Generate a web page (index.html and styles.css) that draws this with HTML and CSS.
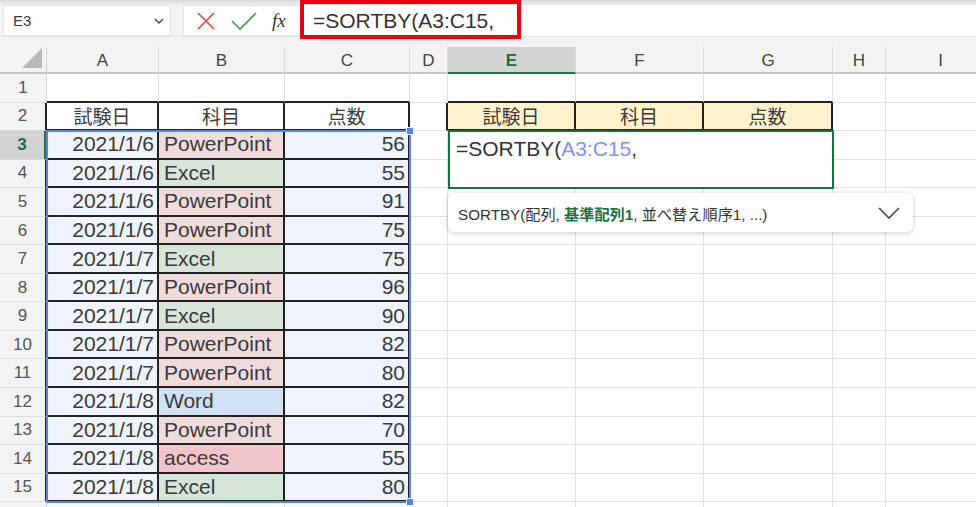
FILE: index.html
```html
<!DOCTYPE html>
<html lang="ja">
<head>
    <meta charset="UTF-8">
    <title>SORTBY</title>
    <link rel="stylesheet" href="styles.css">
</head>
<body>
    <div class="top">
        <div class="formula-bar">
            <div class="name-box">
                <span>E3</span>
                <svg class="caret" width="10" height="6" viewBox="0 0 10 6"><path d="M1 1 L5 5 L9 1" fill="none" stroke="#444" stroke-width="1.4"/></svg>
            </div>
            <div class="fx-box">
                <svg width="20" height="20" viewBox="0 0 20 20"><path d="M2 2 L18 18 M18 2 L2 18" stroke="#e2453c" stroke-width="1.6"/></svg>
                <svg width="26" height="20" viewBox="0 0 26 20"><path d="M1 10 L9 18 L25 2" fill="none" stroke="#3f9c4f" stroke-width="1.6"/></svg>
                <span class="fx">fx</span>
            </div>
            <div class="formula-input">=SORTBY(A3:C15,</div>
        </div>
        <div class="mark"></div>
    </div>

    <div class="sheet" id="sheet"></div>

    <script>
        const sheet = document.getElementById('sheet');
        const cols = ['', 'A', 'B', 'C', 'D', 'E', 'F', 'G', 'H', 'I'];
        const data = [
            ['2021/1/6', 'PowerPoint', 56],
            ['2021/1/6', 'Excel', 55],
            ['2021/1/6', 'PowerPoint', 91],
            ['2021/1/6', 'PowerPoint', 75],
            ['2021/1/7', 'Excel', 75],
            ['2021/1/7', 'PowerPoint', 96],
            ['2021/1/7', 'Excel', 90],
            ['2021/1/7', 'PowerPoint', 82],
            ['2021/1/7', 'PowerPoint', 80],
            ['2021/1/8', 'Word', 82],
            ['2021/1/8', 'PowerPoint', 70],
            ['2021/1/8', 'access', 55],
            ['2021/1/8', 'Excel', 80]
        ];
        const subjectClass = { PowerPoint: 'pp', Excel: 'xl', Word: 'wd', access: 'ac' };

        function cell(cls, text) {
            const el = document.createElement('div');
            el.className = 'cell ' + cls;
            if (text !== undefined) el.textContent = text;
            sheet.appendChild(el);
            return el;
        }

        // 列見出し
        cols.forEach((c, i) => {
            if (i === 0) {
                cell('corner').innerHTML = '<span class="tri"></span>';
            } else {
                cell('col-head' + (c === 'E' ? ' active' : ''), c);
            }
        });

        // 行 (16行目は下端で切れるので番号なし)
        for (let r = 1; r <= 16; r++) {
            let head = 'row-head';
            if (r >= 2 && r <= 15) head += ' edge';
            if (r === 3) head += ' active';
            cell(head, r < 16 ? r : '');

            for (let c = 1; c < cols.length; c++) {
                let cls = '';
                let text;
                const col = cols[c];

                if (r === 1 && (col <= 'C' || (col >= 'E' && col <= 'G'))) cls += ' top-edge';
                if (r === 2 && col === 'D') cls += ' right-edge';

                if (r === 2 && col <= 'C') {
                    cls += ' tb head';
                    text = ['試験日', '科目', '点数'][c - 1];
                }
                if (r === 2 && col >= 'E' && col <= 'G') {
                    cls += ' tb head yellow';
                    text = ['試験日', '科目', '点数'][c - 5];
                }
                if (r >= 3 && r <= 15 && col <= 'C') {
                    const row = data[r - 3];
                    cls += ' tb';
                    if (col === 'A') { cls += ' num sel'; text = row[0]; }
                    if (col === 'B') { cls += ' ' + subjectClass[row[1]]; text = row[1]; }
                    if (col === 'C') { cls += ' num sel'; text = row[2]; }
                }
                cell(cls.trim(), text);
            }
        }

        // 参照範囲・編集中セル・ヒント
        const range = document.createElement('div');
        range.className = 'range';
        range.innerHTML = '<span class="handle tr"></span><span class="handle br"></span>';
        sheet.appendChild(range);

        const edit = document.createElement('div');
        edit.className = 'editing';
        edit.innerHTML = '=SORTBY(<span class="ref">A3:C15</span>,';
        sheet.appendChild(edit);

        const tip = document.createElement('div');
        tip.className = 'tip';
        tip.innerHTML = '<span>SORTBY(配列, <b>基準配列1</b>, 並べ替え順序1, ...)</span>' +
            '<svg width="22" height="12" viewBox="0 0 22 12"><path d="M1 1 L11 11 L21 1" fill="none" stroke="#444" stroke-width="1.6"/></svg>';
        sheet.appendChild(tip);
    </script>
</body>
</html>
```

FILE: styles.css
```css
* {
    box-sizing: border-box;
}
body {
    margin: 0;
    width: 976px;
    height: 507px;
    overflow: hidden;
    background-color: #fff;
    font-family: 'Liberation Sans', 'Noto Sans CJK JP', sans-serif;
    color: #3a3a3a;
}
.top {
    position: relative;
    height: 47px;
    background-color: #f3f3f3;
    background-image: linear-gradient(#d9d9d9, #efefef 5px, #f3f3f3 5px);
}
.formula-bar {
    display: flex;
    height: 37px;
    padding-top: 5px;
    border-bottom: 1px solid #e2e2e2;
}
.name-box {
    display: flex;
    align-items: center;
    justify-content: space-between;
    width: 168px;
    margin-left: 3px;
    padding: 0 6px 0 9px;
    background-color: #fff;
    border: 1px solid #e4e4e4;
    font-size: 15px;
}
.fx-box {
    display: flex;
    align-items: center;
    gap: 15px;
    width: 120px;
    margin-left: 12px;
    padding-left: 12px;
    background-color: #fff;
    border: 1px solid #e4e4e4;
    border-right: none;
}
.fx {
    font-family: 'Liberation Serif', serif;
    font-style: italic;
    font-size: 19px;
    color: #333;
}
.formula-input {
    flex: 1;
    display: flex;
    align-items: center;
    padding-left: 10px;
    background-color: #fff;
    font-size: 21px;
    color: #333;
}
.mark {
    position: absolute;
    left: 300px;
    top: 0;
    width: 221px;
    height: 39px;
    border: 4px solid #e8000f;
}
.sheet {
    position: relative;
    display: grid;
    grid-template-columns: 47px 112px 126px 125px 38px 128px 128px 129px 53px 110px;
    grid-template-rows: 27px;
    grid-auto-rows: 28.55px;
    height: 460px;
    overflow: hidden;
    font-size: 21px;
}
.cell {
    display: flex;
    align-items: center;
    padding: 0 4px;
    white-space: nowrap;
    overflow: hidden;
    border-right: 1px solid #e1e1e1;
    border-bottom: 1px solid #e1e1e1;
}
.corner {
    position: relative;
    background-color: #f3f3f3;
    border-right: 1px solid #d4d4d4;
    border-bottom: 2px solid #c6c6c6;
}
.tri {
    position: absolute;
    right: 4px;
    bottom: 4px;
    border-left: 20px solid transparent;
    border-bottom: 20px solid #b9b9b9;
}
.col-head {
    justify-content: center;
    background-color: #f3f3f3;
    font-size: 17px;
    color: #444;
    border-right: 1px solid #dadada;
    border-bottom: 2px solid #c6c6c6;
    padding-top: 3px;
}
.col-head.active {
    background-color: #d3d3d3;
    color: #1f6b3f;
    font-weight: bold;
    border-bottom: 2px solid #1f7244;
}
.row-head {
    justify-content: center;
    background-color: #f3f3f3;
    font-size: 17px;
    color: #555;
    border-right: 1px solid #d4d4d4;
    border-bottom: 1px solid #dddddd;
}
.row-head.edge {
    border-right: 2px solid #222;
}
.row-head.active {
    background-color: #d3d3d3;
    color: #1f6b3f;
    font-weight: bold;
    border-right: 3px solid #1f7244;
}
.top-edge {
    border-bottom: 2px solid #222;
}
.right-edge {
    border-right: 2px solid #222;
}
.tb {
    border-right: 2px solid #222;
    border-bottom: 2px solid #222;
}
.head {
    justify-content: center;
    font-size: 19px;
}
.yellow {
    background-color: #fff2cc;
}
.num {
    justify-content: flex-end;
    padding-right: 3px;
}
.sel {
    background-color: #eef3fd;
}
.pp {
    background-color: #efdcda;
    padding-left: 5px;
}
.xl {
    background-color: #d6e5d8;
    padding-left: 5px;
}
.wd {
    background-color: #d0e1f5;
    padding-left: 5px;
}
.ac {
    background-color: #f0c6cc;
    padding-left: 5px;
}
.range {
    position: absolute;
    left: 46px;
    top: 83px;
    width: 365px;
    height: 373px;
    border: 2px solid #5286e0;
}
.handle {
    position: absolute;
    right: -5px;
    width: 8px;
    height: 8px;
    background-color: #5286e0;
    border: 1px solid #fff;
}
.handle.tr {
    top: -5px;
}
.handle.br {
    bottom: -5px;
}
.editing {
    position: absolute;
    left: 448px;
    top: 83px;
    width: 386px;
    height: 59px;
    padding: 5px 6px;
    background-color: #fff;
    border: 2px solid #1f6e41;
    font-size: 21px;
    color: #333;
}
.ref {
    color: #7b93ec;
}
.tip {
    position: absolute;
    left: 448px;
    top: 146px;
    width: 465px;
    height: 39px;
    display: flex;
    align-items: center;
    justify-content: space-between;
    padding: 0 13px 0 10px;
    background-color: #fff;
    border-radius: 6px;
    box-shadow: 0 1px 5px rgba(0,0,0,0.22);
    font-size: 15.2px;
    color: #333;
}
.tip b {
    color: #1e7145;
}
```
